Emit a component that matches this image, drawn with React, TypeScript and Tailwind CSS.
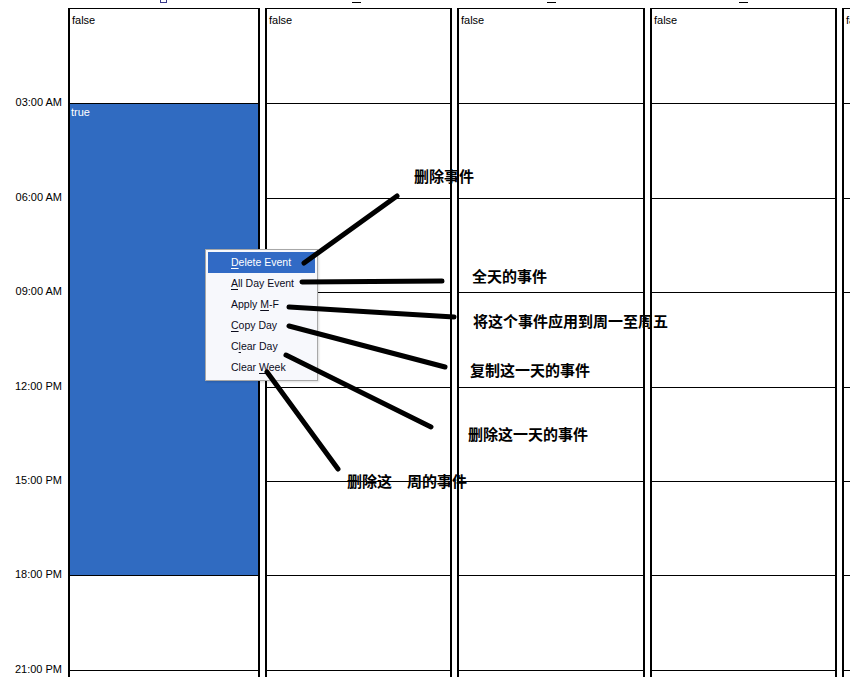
import React from 'react';

// row heights so that grid lines land on 103, 198, 292, 387, 481, 575, 670
const ROWS = ['h-[95px]', 'h-[95px]', 'h-[94px]', 'h-[95px]', 'h-[94px]', 'h-[94px]', 'h-[95px]', 'h-[95px]'];
const TIMES = ['03:00 AM', '06:00 AM', '09:00 AM', '12:00 PM', '15:00 PM', '18:00 PM', '21:00 PM', ''];

const Cell: React.FC<{ h: string; label?: string }> = ({ h, label }) => (
  <div className={`${h} shrink-0 border-b border-black bg-white px-[2px] pt-[4px] text-[11px] leading-[14px] text-black`}>
    {label}
  </div>
);

const DayColumn: React.FC<{ width: string }> = ({ width }) => (
  <div className={`${width} shrink-0 flex flex-col border-x-2 border-t border-black`}>
    {ROWS.map((h, i) => (
      <Cell key={i} h={h} label={i === 0 ? 'false' : undefined} />
    ))}
  </div>
);

const FirstColumn: React.FC = () => (
  <div className="w-[192px] shrink-0 flex flex-col border-x-2 border-t border-black">
    <Cell h={ROWS[0]} label="false" />
    {/* event block spans five rows */}
    <div className="h-[472px] shrink-0 border-b border-black bg-[#306bc1] px-[1px] pt-[1px] text-[11px] leading-[14px] text-white">
      true
    </div>
    <Cell h={ROWS[6]} />
    <Cell h={ROWS[7]} />
  </div>
);

const MenuItem: React.FC<{ pre: string; key_: string; post: string; active?: boolean }> = ({ pre, key_, post, active }) => (
  <div
    className={`h-[21px] flex items-center pl-[23px] text-[10.5px] ${
      active ? 'bg-[#316ac5] text-white' : 'text-[#0c0c1c]'
    }`}
  >
    <span>
      {pre}
      <span className="underline underline-offset-2">{key_}</span>
      {post}
    </span>
  </div>
);

const ContextMenu: React.FC = () => (
  <div className="absolute left-[205px] top-[249px] w-[113px] border border-[#a8a8a8] bg-[#f7f8fc] p-[2px] shadow-[1px_1px_2px_rgba(0,0,0,0.15)] font-['Liberation_Sans',Arial,sans-serif]">
    <MenuItem pre="" key_="D" post="elete Event" active />
    <MenuItem pre="" key_="A" post="ll Day Event" />
    <MenuItem pre="Apply " key_="M" post="-F" />
    <MenuItem pre="" key_="C" post="opy Day" />
    <MenuItem pre="C" key_="l" post="ear Day" />
    <MenuItem pre="Clear " key_="W" post="eek" />
  </div>
);

const notes = [
  { text: '删除事件', cls: 'left-[414px] top-[168px]' },
  { text: '全天的事件', cls: 'left-[472px] top-[268px]' },
  { text: '将这个事件应用到周一至周五', cls: 'left-[473px] top-[313px]' },
  { text: '复制这一天的事件', cls: 'left-[470px] top-[362px]' },
  { text: '删除这一天的事件', cls: 'left-[468px] top-[426px]' },
  { text: '删除这　周的事件', cls: 'left-[347px] top-[473px]' },
];

const strokes: [number, number, number, number][] = [
  [304, 263, 397, 196],
  [302, 282, 442, 281],
  [289, 307, 454, 317],
  [289, 326, 445, 367],
  [286, 355, 431, 427],
  [267, 372, 338, 469],
];

export default function App() {
  return (
    <div className="relative h-[677px] w-[850px] overflow-hidden bg-white font-['Liberation_Sans',Arial,sans-serif]">
      {/* cut-off column headers */}
      <span className="absolute left-[160px] top-[-3px] h-[6px] w-[7px] border-x border-b border-[#3a3a8a]" />
      <span className="absolute left-[352px] top-[2px] h-[1px] w-[9px] bg-black" />
      <span className="absolute left-[547px] top-[2px] h-[1px] w-[9px] bg-black" />
      <span className="absolute left-[739px] top-[2px] h-[1px] w-[9px] bg-black" />

      <div className="flex pt-[8px]">
        <div className="w-[68px] shrink-0 flex flex-col">
          {TIMES.map((t, i) => (
            <div key={i} className={`${ROWS[i]} shrink-0 flex items-end justify-end pr-[6px]`}>
              <span className="translate-y-[6px] text-[11px] leading-[13px] text-black">{t}</span>
            </div>
          ))}
        </div>
        <div className="flex gap-[5px]">
          <FirstColumn />
          <DayColumn width="w-[187px]" />
          <DayColumn width="w-[188px]" />
          <DayColumn width="w-[187px]" />
          <DayColumn width="w-[187px]" />
        </div>
      </div>

      <ContextMenu />

      <svg className="pointer-events-none absolute left-0 top-0" width="850" height="677">
        {strokes.map(([x1, y1, x2, y2], i) => (
          <line key={i} x1={x1} y1={y1} x2={x2} y2={y2} stroke="#000" strokeWidth="5" strokeLinecap="round" />
        ))}
      </svg>

      {notes.map((n) => (
        <span
          key={n.text}
          className={`absolute ${n.cls} whitespace-nowrap text-[15px] font-bold leading-[16px] text-black font-['Noto_Sans_CJK_SC','Noto_Sans_CJK_JP',sans-serif]`}
        >
          {n.text}
        </span>
      ))}
    </div>
  );
}
